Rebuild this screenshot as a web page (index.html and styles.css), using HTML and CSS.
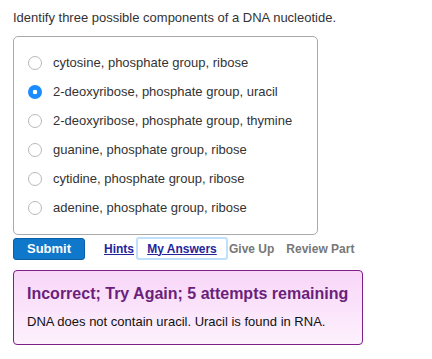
FILE: index.html
```html
<!DOCTYPE html>
<html>
<head>
<meta charset="utf-8">
<link rel="stylesheet" href="styles.css">
</head>
<body>
<div class="page">
  <p class="question">Identify three possible components of a DNA nucleotide.</p>
  <div class="choices">
    <label class="choice"><span class="radio"></span><span>cytosine, phosphate group, ribose</span></label>
    <label class="choice"><span class="radio checked"></span><span>2-deoxyribose, phosphate group, uracil</span></label>
    <label class="choice"><span class="radio"></span><span>2-deoxyribose, phosphate group, thymine</span></label>
    <label class="choice"><span class="radio"></span><span>guanine, phosphate group, ribose</span></label>
    <label class="choice"><span class="radio"></span><span>cytidine, phosphate group, ribose</span></label>
    <label class="choice"><span class="radio"></span><span>adenine, phosphate group, ribose</span></label>
  </div>
  <div class="actions">
    <button class="submit">Submit</button>
    <a class="link hints">Hints</a>
    <a class="link answers">My Answers</a>
    <span class="muted giveup">Give Up</span>
    <span class="muted review">Review Part</span>
  </div>
  <div class="feedback">
    <h2 class="fb-title">Incorrect; Try Again; 5 attempts remaining</h2>
    <p class="fb-text">DNA does not contain uracil. Uracil is found in RNA.</p>
  </div>
</div>
</body>
</html>
```
FILE: styles.css
```css
html, body {
  margin: 0;
  padding: 0;
  background: #fff;
}
body {
  font-family: "Liberation Sans", Arial, sans-serif;
  font-size: 13px;
  color: #333;
}
.page {
  padding: 10px 13px;
}
.question {
  margin: 0;
  line-height: 15px;
}
.choices {
  margin-top: 11px;
  width: 303px;
  border: 1px solid #aaa;
  border-radius: 5px;
  padding: 11px 0 12px 0;
}
.choice {
  display: flex;
  align-items: center;
  height: 29px;
  padding-left: 14px;
}
.radio {
  box-sizing: border-box;
  width: 14px;
  height: 14px;
  border: 1px solid #b8b8b8;
  border-radius: 50%;
  margin-right: 11px;
  background: #fff;
  flex: none;
}
.radio.checked {
  border: none;
  background: radial-gradient(circle, #fff 0 2px, #1a8cff 2.6px);
}
.actions {
  display: flex;
  align-items: center;
  margin-top: 2px;
  height: 23px;
  font-weight: bold;
  font-size: 12px;
}
.submit {
  width: 72px;
  height: 22px;
  background: #0f78cb;
  border: 1px solid #0b5fa5;
  border-radius: 3px;
  color: #fff;
  font-family: inherit;
  font-weight: bold;
  font-size: 13px;
  padding: 0;
  margin-right: 19px;
}
.link {
  color: #25259a;
  text-decoration: underline;
}
.hints {
  margin-right: 2px;
}
.answers {
  box-sizing: border-box;
  height: 23px;
  width: 92px;
  display: flex;
  align-items: center;
  justify-content: center;
  border: 2px solid #bfe0fb;
  border-radius: 3px;
  margin-right: 1px;
}
.muted {
  color: #777;
}
.giveup {
  margin-right: 12px;
}
.feedback {
  margin-top: 10px;
  width: 350px;
  border: 1px solid #7e1f88;
  border-radius: 4px;
  background: linear-gradient(#f8d6f8, #fdf1fd);
  padding: 13px 13px 0 13px;
  box-sizing: border-box;
  height: 75px;
}
.fb-title {
  margin: 0;
  font-size: 16px;
  line-height: 19px;
  color: #6b1f7b;
  font-weight: bold;
  white-space: nowrap;
}
.fb-text {
  margin: 11px 0 0 0;
  font-size: 13px;
  color: #111;
  line-height: 15px;
}
```
